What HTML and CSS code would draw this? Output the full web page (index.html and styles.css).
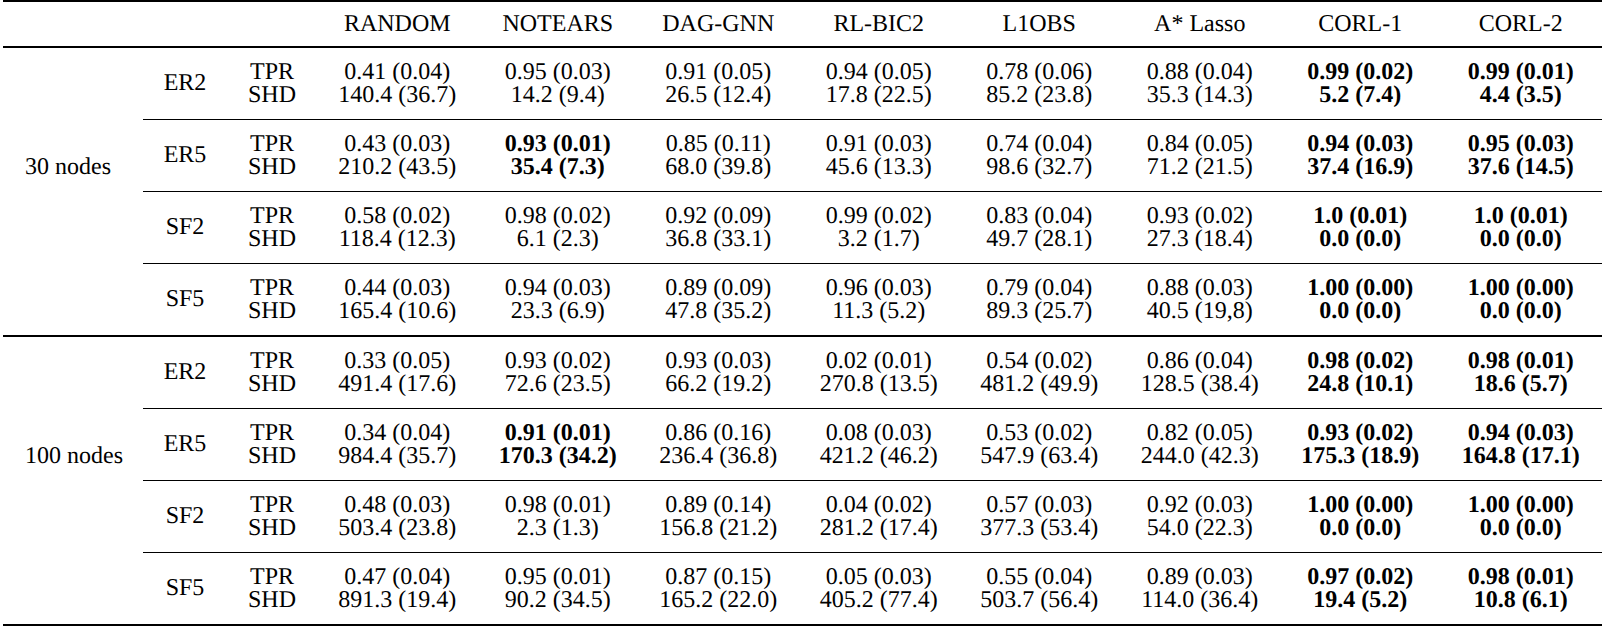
FILE: index.html
```html
<!DOCTYPE html>
<html lang="en">
<head>
<meta charset="utf-8">
<title>Results table</title>
<link rel="stylesheet" href="styles.css">
</head>
<body>
<div class="table">
  <div class="header">
    <div></div><div></div><div></div>
    <div class="col">RANDOM</div>
    <div class="col">NOTEARS</div>
    <div class="col">DAG-GNN</div>
    <div class="col">RL-BIC2</div>
    <div class="col">L1OBS</div>
    <div class="col">A* Lasso</div>
    <div class="col">CORL-1</div>
    <div class="col">CORL-2</div>
  </div>

  <div class="block">
    <div class="blabel">30 nodes</div>
    <div class="groups">
      <div class="group">
        <div class="gname">ER2</div>
        <div class="metric"><span>TPR</span><span>SHD</span></div>
        <div class="cell"><span>0.41 (0.04)</span><span>140.4 (36.7)</span></div>
        <div class="cell"><span>0.95 (0.03)</span><span>14.2 (9.4)</span></div>
        <div class="cell"><span>0.91 (0.05)</span><span>26.5 (12.4)</span></div>
        <div class="cell"><span>0.94 (0.05)</span><span>17.8 (22.5)</span></div>
        <div class="cell"><span>0.78 (0.06)</span><span>85.2 (23.8)</span></div>
        <div class="cell"><span>0.88 (0.04)</span><span>35.3 (14.3)</span></div>
        <div class="cell"><b>0.99 (0.02)</b><b>5.2 (7.4)</b></div>
        <div class="cell"><b>0.99 (0.01)</b><b>4.4 (3.5)</b></div>
      </div>
      <div class="group">
        <div class="gname">ER5</div>
        <div class="metric"><span>TPR</span><span>SHD</span></div>
        <div class="cell"><span>0.43 (0.03)</span><span>210.2 (43.5)</span></div>
        <div class="cell"><b>0.93 (0.01)</b><b>35.4 (7.3)</b></div>
        <div class="cell"><span>0.85 (0.11)</span><span>68.0 (39.8)</span></div>
        <div class="cell"><span>0.91 (0.03)</span><span>45.6 (13.3)</span></div>
        <div class="cell"><span>0.74 (0.04)</span><span>98.6 (32.7)</span></div>
        <div class="cell"><span>0.84 (0.05)</span><span>71.2 (21.5)</span></div>
        <div class="cell"><b>0.94 (0.03)</b><b>37.4 (16.9)</b></div>
        <div class="cell"><b>0.95 (0.03)</b><b>37.6 (14.5)</b></div>
      </div>
      <div class="group">
        <div class="gname">SF2</div>
        <div class="metric"><span>TPR</span><span>SHD</span></div>
        <div class="cell"><span>0.58 (0.02)</span><span>118.4 (12.3)</span></div>
        <div class="cell"><span>0.98 (0.02)</span><span>6.1 (2.3)</span></div>
        <div class="cell"><span>0.92 (0.09)</span><span>36.8 (33.1)</span></div>
        <div class="cell"><span>0.99 (0.02)</span><span>3.2 (1.7)</span></div>
        <div class="cell"><span>0.83 (0.04)</span><span>49.7 (28.1)</span></div>
        <div class="cell"><span>0.93 (0.02)</span><span>27.3 (18.4)</span></div>
        <div class="cell"><b>1.0 (0.01)</b><b>0.0 (0.0)</b></div>
        <div class="cell"><b>1.0 (0.01)</b><b>0.0 (0.0)</b></div>
      </div>
      <div class="group">
        <div class="gname">SF5</div>
        <div class="metric"><span>TPR</span><span>SHD</span></div>
        <div class="cell"><span>0.44 (0.03)</span><span>165.4 (10.6)</span></div>
        <div class="cell"><span>0.94 (0.03)</span><span>23.3 (6.9)</span></div>
        <div class="cell"><span>0.89 (0.09)</span><span>47.8 (35.2)</span></div>
        <div class="cell"><span>0.96 (0.03)</span><span>11.3 (5.2)</span></div>
        <div class="cell"><span>0.79 (0.04)</span><span>89.3 (25.7)</span></div>
        <div class="cell"><span>0.88 (0.03)</span><span>40.5 (19,8)</span></div>
        <div class="cell"><b>1.00 (0.00)</b><b>0.0 (0.0)</b></div>
        <div class="cell"><b>1.00 (0.00)</b><b>0.0 (0.0)</b></div>
      </div>
    </div>
  </div>

  <div class="block">
    <div class="blabel">100 nodes</div>
    <div class="groups">
      <div class="group">
        <div class="gname">ER2</div>
        <div class="metric"><span>TPR</span><span>SHD</span></div>
        <div class="cell"><span>0.33 (0.05)</span><span>491.4 (17.6)</span></div>
        <div class="cell"><span>0.93 (0.02)</span><span>72.6 (23.5)</span></div>
        <div class="cell"><span>0.93 (0.03)</span><span>66.2 (19.2)</span></div>
        <div class="cell"><span>0.02 (0.01)</span><span>270.8 (13.5)</span></div>
        <div class="cell"><span>0.54 (0.02)</span><span>481.2 (49.9)</span></div>
        <div class="cell"><span>0.86 (0.04)</span><span>128.5 (38.4)</span></div>
        <div class="cell"><b>0.98 (0.02)</b><b>24.8 (10.1)</b></div>
        <div class="cell"><b>0.98 (0.01)</b><b>18.6 (5.7)</b></div>
      </div>
      <div class="group">
        <div class="gname">ER5</div>
        <div class="metric"><span>TPR</span><span>SHD</span></div>
        <div class="cell"><span>0.34 (0.04)</span><span>984.4 (35.7)</span></div>
        <div class="cell"><b>0.91 (0.01)</b><b>170.3 (34.2)</b></div>
        <div class="cell"><span>0.86 (0.16)</span><span>236.4 (36.8)</span></div>
        <div class="cell"><span>0.08 (0.03)</span><span>421.2 (46.2)</span></div>
        <div class="cell"><span>0.53 (0.02)</span><span>547.9 (63.4)</span></div>
        <div class="cell"><span>0.82 (0.05)</span><span>244.0 (42.3)</span></div>
        <div class="cell"><b>0.93 (0.02)</b><b>175.3 (18.9)</b></div>
        <div class="cell"><b>0.94 (0.03)</b><b>164.8 (17.1)</b></div>
      </div>
      <div class="group">
        <div class="gname">SF2</div>
        <div class="metric"><span>TPR</span><span>SHD</span></div>
        <div class="cell"><span>0.48 (0.03)</span><span>503.4 (23.8)</span></div>
        <div class="cell"><span>0.98 (0.01)</span><span>2.3 (1.3)</span></div>
        <div class="cell"><span>0.89 (0.14)</span><span>156.8 (21.2)</span></div>
        <div class="cell"><span>0.04 (0.02)</span><span>281.2 (17.4)</span></div>
        <div class="cell"><span>0.57 (0.03)</span><span>377.3 (53.4)</span></div>
        <div class="cell"><span>0.92 (0.03)</span><span>54.0 (22.3)</span></div>
        <div class="cell"><b>1.00 (0.00)</b><b>0.0 (0.0)</b></div>
        <div class="cell"><b>1.00 (0.00)</b><b>0.0 (0.0)</b></div>
      </div>
      <div class="group">
        <div class="gname">SF5</div>
        <div class="metric"><span>TPR</span><span>SHD</span></div>
        <div class="cell"><span>0.47 (0.04)</span><span>891.3 (19.4)</span></div>
        <div class="cell"><span>0.95 (0.01)</span><span>90.2 (34.5)</span></div>
        <div class="cell"><span>0.87 (0.15)</span><span>165.2 (22.0)</span></div>
        <div class="cell"><span>0.05 (0.03)</span><span>405.2 (77.4)</span></div>
        <div class="cell"><span>0.55 (0.04)</span><span>503.7 (56.4)</span></div>
        <div class="cell"><span>0.89 (0.03)</span><span>114.0 (36.4)</span></div>
        <div class="cell"><b>0.97 (0.02)</b><b>19.4 (5.2)</b></div>
        <div class="cell"><b>0.98 (0.01)</b><b>10.8 (6.1)</b></div>
      </div>
    </div>
  </div>
</div>
</body>
</html>
```

FILE: styles.css
```css
html, body {
  margin: 0;
  padding: 0;
  background: #fff;
}

body {
  font-family: "Liberation Serif", "Times New Roman", serif;
  font-size: 24px;
  line-height: 23px;
  color: #000;
  text-rendering: geometricPrecision;
}

.table {
  margin-left: 3px;
  width: 1599px;
  border-top: 2px solid #000;
  border-bottom: 2px solid #000;
}

.header {
  display: grid;
  grid-template-columns: 140px 84px 90px repeat(8, 160.5px);
  align-items: center;
  height: 44px;
  border-bottom: 2px solid #000;
}

.col {
  text-align: center;
  white-space: nowrap;
}

.block {
  display: grid;
  grid-template-columns: 140px 1fr;
}

.block + .block {
  border-top: 2px solid #000;
}

.blabel {
  padding-top: 108px;
  padding-left: 22px;
  white-space: nowrap;
}

.groups {
  display: flex;
  flex-direction: column;
}

.group {
  display: grid;
  grid-template-columns: 84px 90px repeat(8, 160.5px);
  align-items: center;
  height: 71px;
}

.group + .group {
  border-top: 1px solid #000;
}

.gname {
  text-align: center;
}

.metric,
.cell {
  display: flex;
  flex-direction: column;
  align-items: center;
  white-space: nowrap;
}

.cell b {
  font-weight: bold;
}
```
